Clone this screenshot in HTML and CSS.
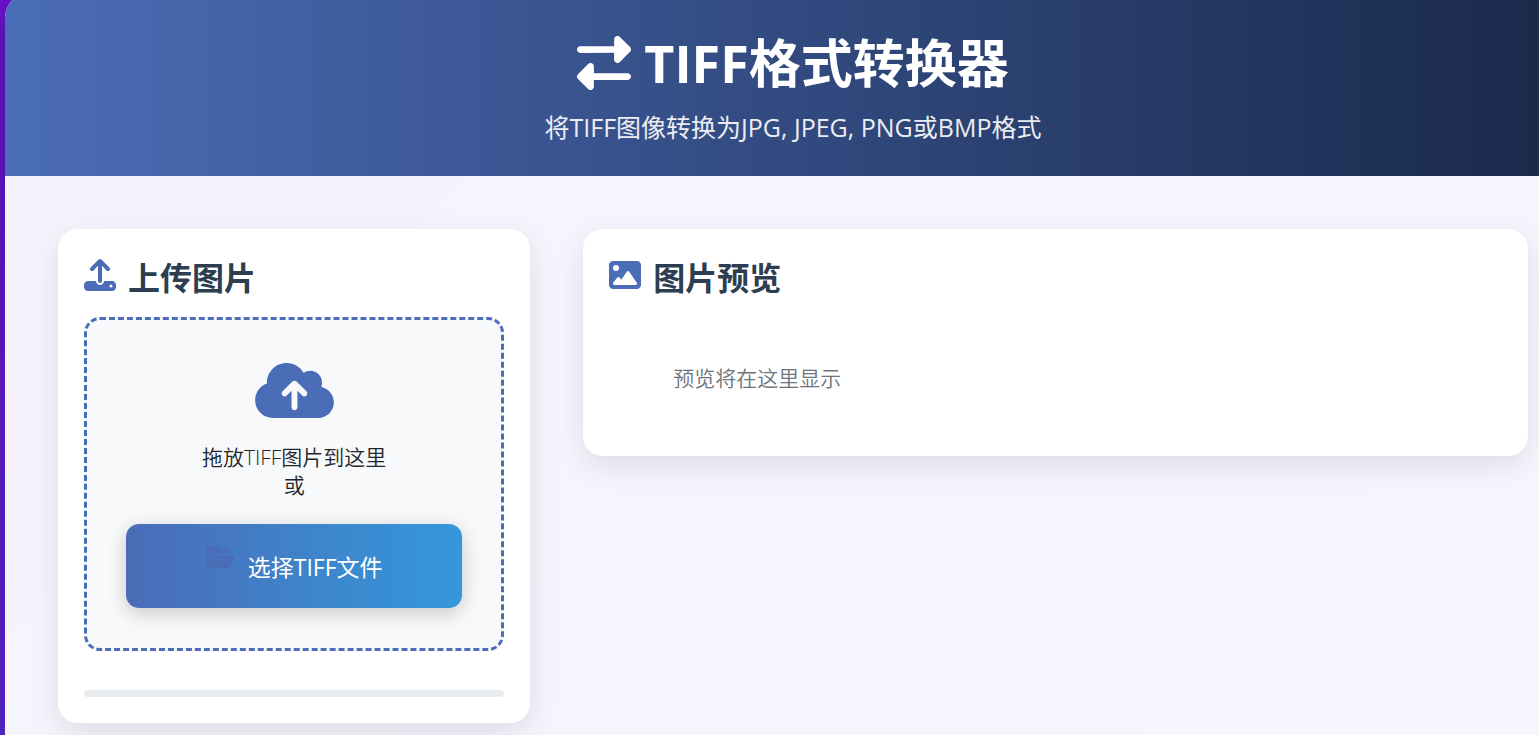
FILE: index.html
```html
<!DOCTYPE html>
<html lang="zh-CN">
<head>
    <meta charset="UTF-8">
    <meta name="viewport" content="width=device-width, initial-scale=1.0">
    <title>TIFF格式转换器</title>
    <link rel="stylesheet" href="styles.css">
</head>
<body>
    <div class="container">
        <header>
            <h1>
                <svg class="title-icon" viewBox="0 0 512 512" aria-hidden="true"><path d="M32 96l320 0 0-64c0-12.900 7.800-24.600 19.800-29.600s25.700-2.200 34.900 6.900l96 96c6 6 9.400 14.100 9.400 22.600s-3.400 16.600-9.400 22.600l-96 96c-9.200 9.200-22.900 11.900-34.900 6.900s-19.800-16.600-19.800-29.600l0-64L32 160c-17.700 0-32-14.300-32-32s14.300-32 32-32zM480 352c17.700 0 32 14.300 32 32s-14.300 32-32 32l-320 0 0 64c0 12.900-7.800 24.600-19.800 29.600s-25.700 2.200-34.900-6.900l-96-96c-6-6-9.400-14.100-9.400-22.600s3.400-16.600 9.400-22.600l96-96c9.200-9.200 22.900-11.900 34.900-6.900s19.800 16.600 19.800 29.600l0 64 320 0z"/></svg>
                <span>TIFF格式转换器</span>
            </h1>
            <p class="subtitle">将TIFF图像转换为JPG, JPEG, PNG或BMP格式</p>
        </header>

        <main class="content">
            <section class="card">
                <h2>
                    <svg class="card-icon" viewBox="0 0 512 512" aria-hidden="true"><path d="M288 109.300V352c0 17.700-14.300 32-32 32s-32-14.300-32-32V109.300l-73.400 73.400c-12.500 12.500-32.800 12.500-45.300 0s-12.500-32.800 0-45.300l128-128c12.500-12.500 32.800-12.500 45.300 0l128 128c12.500 12.500 12.500 32.800 0 45.300s-32.800 12.500-45.300 0L288 109.300zM64 352H192c0 35.300 28.700 64 64 64s64-28.700 64-64H448c35.300 0 64 28.700 64 64v32c0 35.300-28.700 64-64 64H64c-35.300 0-64-28.700-64-64V416c0-35.300 28.700-64 64-64zM432 456a24 24 0 1 0 0-48 24 24 0 1 0 0 48z"/></svg>
                    <span>上传图片</span>
                </h2>
                <div class="upload-area" id="drop-area">
                    <svg class="cloud-icon" viewBox="0 0 640 512" aria-hidden="true"><path d="M144 480C64.500 480 0 415.500 0 336c0-62.800 40.200-116.200 96.200-135.900c-.1-2.700-.2-5.400-.2-8.100c0-88.400 71.600-160 160-160c59.300 0 111 32.200 138.700 80.200C409.900 102 428.300 96 448 96c53 0 96 43 96 96c0 12.200-2.300 23.800-6.400 34.600C596 238.400 640 290.100 640 352c0 70.700-57.300 128-128 128H144zm79-217c-9.400 9.400-9.400 24.600 0 33.900s24.600 9.400 33.900 0l39-39V392c0 13.300 10.700 24 24 24s24-10.700 24-24V257.900l39 39c9.400 9.400 24.600 9.400 33.900 0s9.400-24.600 0-33.900l-80-80c-9.400-9.400-24.600-9.400-33.900 0l-80 80z"/></svg>
                    <p>拖放TIFF图片到这里</p>
                    <p>或</p>
                    <button type="button" class="btn">
                        <svg class="btn-icon" viewBox="0 0 576 512" aria-hidden="true"><path d="M88.700 223.800L0 375.800V96C0 60.700 28.700 32 64 32H181.500c17 0 33.300 6.700 45.300 18.700l26.500 26.500c12 12 28.300 18.700 45.300 18.700H416c35.300 0 64 28.700 64 64v32H144c-22.800 0-43.800 12.100-55.300 31.800zm27.600 16.100C122.100 230 132.600 224 144 224H544c11.500 0 22 6.100 27.700 16.100s5.700 22.200-.1 32.100l-112 192C453.900 474 443.400 480 432 480H32c-11.500 0-22-6.100-27.700-16.100s-5.700-22.200 .1-32.100l112-192z"/></svg>
                        <span>选择TIFF文件</span>
                    </button>
                    <input type="file" id="file-input" accept=".tif,.tiff" aria-label="选择TIFF文件" hidden>
                </div>
                <progress class="progress" value="0" max="100" aria-label="上传图片"></progress>
            </section>

            <section class="card">
                <h2>
                    <svg class="card-icon" viewBox="0 0 512 512" aria-hidden="true"><path d="M0 96C0 60.700 28.700 32 64 32H448c35.300 0 64 28.700 64 64V416c0 35.300-28.700 64-64 64H64c-35.300 0-64-28.700-64-64V96zM323.800 202.500c-4.500-6.600-11.900-10.500-19.800-10.500s-15.400 3.900-19.800 10.500l-87 127.600L170.700 297c-4.600-5.700-11.500-9-18.700-9s-14.200 3.300-18.700 9l-64 80c-5.800 7.200-6.900 17.100-2.900 25.400s12.400 13.600 21.600 13.600h96 32H424c8.900 0 17.100-4.900 21.200-12.800s3.600-17.400-1.400-24.700l-120-176zM112 192a48 48 0 1 0 0-96 48 48 0 1 0 0 96z"/></svg>
                    <span>图片预览</span>
                </h2>
                <div class="preview">预览将在这里显示</div>
            </section>
        </main>
    </div>

    <script>
        document.querySelector('.btn').addEventListener('click', function () {
            document.getElementById('file-input').click();
        });
    </script>
</body>
</html>
```

FILE: styles.css
```css
* {
    margin: 0;
    padding: 0;
    box-sizing: border-box;
}

body {
    font-family: 'Open Sans', 'Noto Sans CJK SC', sans-serif;
    font-size: 21px;
    line-height: 28px;
    color: #212529;
    background: linear-gradient(135deg, #6a11cb 0%, #2575fc 100%) 0 0 / 120% 200%;
    height: 100vh;
    overflow: hidden;
    display: flex;
}

.container {
    flex: 1;
    margin: -8px -42px 0 5px;
    background: rgba(255, 255, 255, 0.95);
    border-radius: 26px 26px 0 0;
    box-shadow: 0 20px 40px rgba(0, 0, 0, 0.3);
    overflow: hidden;
}

header {
    padding: 40px 32px 32px;
    background: linear-gradient(90deg, #4b6cb7 0%, #182848 100%);
    color: white;
    text-align: center;
}

h1 {
    display: flex;
    justify-content: center;
    align-items: center;
    gap: 13px;
    font-size: 52px;
    font-weight: 700;
    line-height: 62px;
    margin-bottom: 16px;
}

.title-icon {
    width: 54px;
    height: 54px;
    fill: currentColor;
}

.subtitle {
    font-size: 25px;
    line-height: 34px;
    opacity: 0.9;
}

.content {
    display: grid;
    grid-template-columns: 1fr 2fr;
    align-items: start;
    gap: 53px;
    padding: 53px;
}

.card {
    background: white;
    border-radius: 20px;
    padding: 26px;
    box-shadow: 0 10px 32px rgba(0, 0, 0, 0.1);
}

h2 {
    display: flex;
    align-items: center;
    gap: 12px;
    font-size: 32px;
    font-weight: 700;
    line-height: 46px;
    color: #2c3e50;
    margin-bottom: 16px;
}

.card-icon {
    width: 32px;
    height: 32px;
    margin-bottom: 6px;
    fill: #4b6cb7;
}

/* Drop zone */
.upload-area {
    border: 3px dashed #4b6cb7;
    border-radius: 16px;
    background: #f8f9fa;
    padding: 39px 39px 40px;
    text-align: center;
    font-weight: 350;
}

.cloud-icon {
    display: block;
    width: 79px;
    height: 63px;
    margin: 0 auto 21px;
    fill: #4b6cb7;
}

.btn {
    display: flex;
    justify-content: center;
    align-items: flex-start;
    gap: 13px;
    width: 100%;
    margin-top: 25px;
    padding: 20px 26px;
    border: none;
    border-radius: 13px;
    background: linear-gradient(90deg, #4b6cb7 0%, #3498db 100%);
    color: white;
    font-family: inherit;
    font-size: 23px;
    line-height: 44px;
    box-shadow: 0 5px 20px rgba(0, 0, 0, 0.2);
    cursor: pointer;
}

.btn span {
    padding-top: 2px;
    line-height: 42px;
}

.btn-icon {
    width: 29px;
    height: 26px;
    fill: #4b6cb7;
}

.progress {
    display: block;
    appearance: none;
    width: 100%;
    height: 7px;
    margin-top: 39px;
    border: none;
    border-radius: 4px;
    background: #e9ecef;
    overflow: hidden;
}

.progress::-webkit-progress-bar {
    background: #e9ecef;
}

.progress::-webkit-progress-value {
    background: #4b6cb7;
}

.preview {
    padding: 47px 64px 38px;
    color: #6c757d;
    font-weight: 350;
}
```
